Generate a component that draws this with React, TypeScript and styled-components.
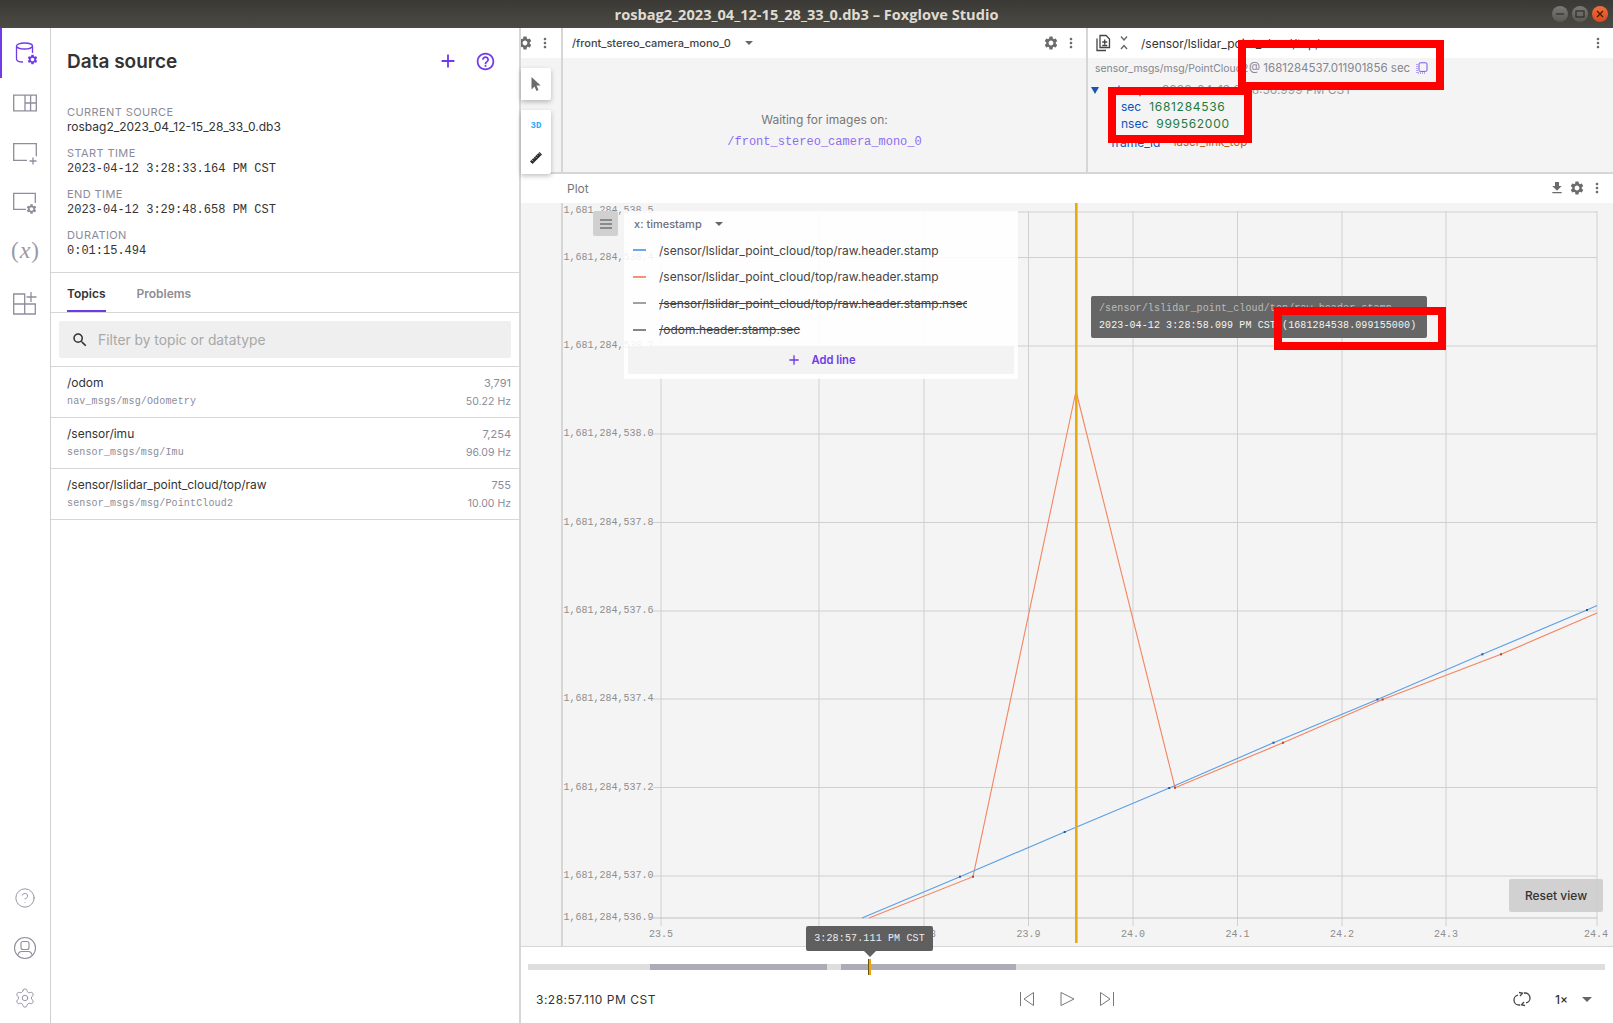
import React from "react";
import styled, { createGlobalStyle } from "styled-components";
import { Settings, CircleHelp } from "lucide-react";
import { MdAdd, MdFileDownload, MdHelpOutline, MdMoreVert, MdSearch, MdSettings } from "react-icons/md";

const SANS = `Inter, "Liberation Sans", sans-serif`;
const MONO = `"Liberation Mono", monospace`;
const PURPLE = "#6f3be8";
const ICON_GREY = "#8f8d9c";
const GEAR_PATH =
  "M19.14 12.94c.04-.3.06-.61.06-.94 0-.32-.02-.64-.07-.94l2.03-1.58c.18-.14.23-.41.12-.61l-1.92-3.32c-.12-.22-.37-.29-.59-.22l-2.39.96c-.5-.38-1.03-.7-1.62-.94l-.36-2.54c-.04-.24-.24-.41-.48-.41h-3.84c-.24 0-.43.17-.47.41l-.36 2.54c-.59.24-1.13.57-1.62.94l-2.39-.96c-.22-.08-.47 0-.59.22L2.74 8.87c-.12.21-.08.47.12.61l2.03 1.58c-.05.3-.09.63-.09.94s.02.64.07.94l-2.03 1.58c-.18.14-.23.41-.12.61l1.92 3.32c.12.22.37.29.59.22l2.39-.96c.5.38 1.03.7 1.62.94l.36 2.54c.05.24.24.41.48.41h3.84c.24 0 .44-.17.47-.41l.36-2.54c.59-.24 1.13-.56 1.62-.94l2.39.96c.22.08.47 0 .59-.22l1.92-3.32c.12-.22.07-.47-.12-.61l-2.01-1.58zM12 15.6c-1.98 0-3.6-1.62-3.6-3.6s1.62-3.6 3.6-3.6 3.6 1.62 3.6 3.6-1.62 3.6-3.6 3.6z";

const GlobalStyle = createGlobalStyle`
  html, body { margin: 0; padding: 0; background: #fff; }
  * { box-sizing: border-box; }
`;

const Page = styled.div`
  position: relative;
  width: 1613px;
  height: 1023px;
  overflow: hidden;
  display: flex;
  flex-direction: column;
  font-family: ${SANS};
  font-size: 12px;
  color: #333;
`;

const TitleBar = styled.div`
  position: relative;
  height: 28px;
  flex: none;
  display: flex;
  align-items: center;
  justify-content: center;
  background: linear-gradient(#3a3935, #4c4a44);
  color: #dfdbd2;
  font: 700 14.6px "Open Sans", sans-serif;
`;

const WindowButtons = styled.div`
  position: absolute;
  right: 5px;
  top: 6px;
  display: flex;
  gap: 4px;
`;

const WindowButton = styled.div<{ $close?: boolean }>`
  width: 16px;
  height: 16px;
  border-radius: 50%;
  display: flex;
  align-items: center;
  justify-content: center;
  background: ${(p) => (p.$close ? "linear-gradient(#f0703f, #d94a1a)" : "linear-gradient(#7a7974, #5a5954)")};
`;

const Body = styled.div`
  flex: 1;
  display: flex;
  min-height: 0;
`;

const Sidebar = styled.nav`
  width: 51px;
  flex: none;
  display: flex;
  flex-direction: column;
  border-right: 1px solid #d0d0d0;
`;

const SideButton = styled.div<{ $active?: boolean }>`
  width: 50px;
  height: 50px;
  flex: none;
  display: flex;
  align-items: center;
  justify-content: center;
  box-shadow: ${(p) => (p.$active ? `inset 2px 0 0 ${PURPLE}` : "none")};
  color: ${ICON_GREY};
`;

const Spacer = styled.div`
  flex: 1;
`;

const VarIcon = styled.span`
  padding-bottom: 5px;
  font: 23px "Liberation Serif", serif;
  color: #9a98a6;
  i {
    font-size: 24px;
    margin: 0 1px;
  }
`;

const LeftPanel = styled.section`
  position: relative;
  z-index: 1;
  width: 470px;
  flex: none;
  background: #fff;
  border-right: 2px solid #d6d6d6;
`;

const PanelHead = styled.div`
  height: 66px;
  display: flex;
  align-items: center;
  justify-content: space-between;
  padding: 0 23px 0 16px;
`;

const PanelTitle = styled.h1`
  margin: 0;
  font-size: 19px;
  font-weight: 600;
  color: #333;
`;

const HeadActions = styled.div`
  display: flex;
  align-items: center;
  gap: 16px;
  color: ${PURPLE};
`;

const SourceInfo = styled.div`
  display: flex;
  flex-direction: column;
  gap: 11px;
  padding: 11px 16px 14px;
  border-bottom: 1px solid #d6d6d6;
`;

const InfoLabel = styled.div`
  height: 15px;
  line-height: 15px;
  font-size: 11px;
  letter-spacing: 0.4px;
  color: #8b8b99;
`;

const InfoValue = styled.div<{ $mono?: boolean }>`
  height: 15px;
  line-height: ${(p) => (p.$mono ? 17 : 14)}px;
  font-family: ${(p) => (p.$mono ? MONO : SANS)};
  font-size: 12px;
  color: #333;
`;

const Tabs = styled.div`
  height: 40px;
  display: flex;
  gap: 31px;
  padding-left: 16px;
  border-bottom: 1px solid #d6d6d6;
`;

const Tab = styled.div<{ $active?: boolean }>`
  height: 39px;
  line-height: 41px;
  font-size: 12px;
  font-weight: 600;
  color: ${(p) => (p.$active ? "#333" : "#8e8e96")};
  border-bottom: 2px solid ${(p) => (p.$active ? PURPLE : "transparent")};
`;

const SearchWrap = styled.div`
  padding: 8px;
  border-bottom: 1px solid #d6d6d6;
`;

const SearchBox = styled.div`
  height: 37px;
  display: flex;
  align-items: center;
  gap: 9px;
  padding: 0 10px 0 12px;
  border-radius: 2px;
  background: #efefef;
  color: #a8a8a8;
  font-size: 13.8px;
  svg {
    color: #333;
  }
`;

const TopicRow = styled.div`
  height: 51px;
  display: flex;
  align-items: center;
  justify-content: space-between;
  padding: 0 8px 0 16px;
  border-bottom: 1px solid #d6d6d6;
`;

const TopicName = styled.div`
  font-size: 12px;
  line-height: 17px;
  color: #333;
`;

const TopicType = styled.div`
  margin-top: 2px;
  font-family: ${MONO};
  font-size: 10px;
  letter-spacing: 0.15px;
  line-height: 18px;
  color: #8b8b99;
`;

const TopicCount = styled.div`
  font-size: 11px;
  line-height: 17px;
  color: #8b8b99;
`;

const TopicRate = styled.div`
  margin-top: 1px;
  font-size: 10.5px;
  line-height: 17px;
  color: #8b8b99;
`;

const TopicStats = styled.div`
  text-align: right;
`;

const Workspace = styled.main`
  flex: 1;
  min-width: 0;
  display: flex;
  flex-direction: column;
`;

const TopRow = styled.div`
  height: 146px;
  flex: none;
  display: flex;
  border-bottom: 2px solid #d6d6d6;
`;

const Pane = styled.div<{ $width?: number }>`
  position: relative;
  display: flex;
  flex-direction: column;
  background: #f4f4f4;
  flex: ${(p) => (p.$width ? `0 0 ${p.$width}px` : "1")};
  border-right: ${(p) => (p.$width ? "2px solid #d6d6d6" : "none")};
  min-width: 0;
  overflow: ${(p) => (p.$width === 42 ? "visible" : "hidden")};
`;

const PaneHead = styled.div`
  height: 30px;
  flex: none;
  display: flex;
  align-items: center;
  gap: 4px;
  padding: 0 7px 0 9px;
  background: #fff;
  color: #333;
  svg {
    flex: none;
  }
`;

const RawHead = styled(PaneHead)`
  padding-left: 6px;
`;

const SliverHead = styled(PaneHead)`
  padding: 0;
  color: #6b6b6b;
  svg:first-child {
    margin-left: -4px;
  }
`;

const HeadIcons = styled.div`
  margin-left: auto;
  display: flex;
  align-items: center;
  gap: 4px;
  color: #6b6b6b;
`;

const DropTitle = styled.div`
  margin-right: 10px;
  font-size: 11px;
  font-weight: 500;
  color: #444;
`;

const Caret = styled.span<{ $size?: number }>`
  display: inline-block;
  width: 0;
  height: 0;
  border-left: ${(p) => p.$size ?? 5}px solid transparent;
  border-right: ${(p) => p.$size ?? 5}px solid transparent;
  border-top: ${(p) => p.$size ?? 5}px solid #666;
`;

const ToolColumn = styled.div`
  display: flex;
  flex-direction: column;
  gap: 10px;
  padding-top: 10px;
  position: relative;
  z-index: 2;
`;

const ToolCard = styled.div`
  width: 30px;
  display: flex;
  flex-direction: column;
  align-items: center;
  padding: 8px 0;
  gap: 16px;
  border-radius: 0 2px 2px 0;
  background: #fff;
  box-shadow: 0 2px 5px rgba(0, 0, 0, 0.25);
`;

const ThreeD = styled.span`
  height: 16px;
  font: 700 9px/16px ${MONO};
  color: #2aa8ff;
`;

const Waiting = styled.div`
  flex: 1;
  display: flex;
  flex-direction: column;
  align-items: center;
  justify-content: center;
  gap: 2px;
  padding-top: 32px;
  line-height: 21px;
  color: #777;
`;

const WaitingTopic = styled.div`
  font-family: ${MONO};
  color: #8f6cf0;
`;

const RawTitle = styled.div`
  margin-left: 5px;
  white-space: nowrap;
  color: #333;
`;

const RawMeta = styled.div`
  height: 20px;
  flex: none;
  display: flex;
  align-items: center;
  padding-left: 7px;
  color: #85858f;
  white-space: nowrap;
`;

const MetaType = styled.span`
  width: 154px;
  font-size: 10.4px;
`;

const MetaStamp = styled.span`
  display: flex;
  align-items: center;
  gap: 6px;
  font-size: 11.5px;
`;

const RawTree = styled.div`
  margin-top: 3px;
  padding-left: 23px;
  position: relative;
`;

const TreeRow = styled.div<{ $indent?: number; $gap?: number; $drop?: number }>`
  height: 17px;
  line-height: 17px;
  display: flex;
  gap: ${(p) => p.$gap ?? 8}px;
  margin-top: ${(p) => p.$drop ?? 0}px;
  padding-left: ${(p) => p.$indent ?? 0}px;
  white-space: nowrap;
`;

const TreeTriangle = styled.span`
  position: absolute;
  left: 3px;
  top: 6px;
  width: 0;
  height: 0;
  border-left: 4px solid transparent;
  border-right: 4px solid transparent;
  border-top: 7px solid #1a56b0;
`;

const TreeKey = styled.span`
  color: #0b53c0;
`;

const TreeNumber = styled.span`
  color: #247a3c;
  letter-spacing: 0.7px;
`;

const TreeString = styled.span`
  font-size: 11.5px;
  color: #b8621b;
`;

const TreeMuted = styled.span`
  color: #999;
`;

const PlotHead = styled(PaneHead)`
  height: 29px;
  padding: 0 8px 1px 46px;
  color: #777;
`;

const PlotBody = styled.div`
  position: relative;
  flex: none;
  height: 744px;
  background: #f4f4f4;
  border-bottom: 1px solid #d6d6d6;
`;

const Chart = styled.svg`
  display: block;
  width: 1092px;
  height: 743px;
`;

const AxisText = styled.text`
  font: 10px ${MONO};
  fill: #8e8e8e;
`;

const MenuButton = styled.div`
  position: absolute;
  left: 72px;
  top: 8px;
  width: 25px;
  height: 25px;
  display: flex;
  align-items: center;
  justify-content: center;
  border-radius: 2px;
  background: #d0d0d0;
`;

const Legend = styled.div`
  position: absolute;
  left: 103px;
  top: 8px;
  width: 394px;
  height: 168px;
  padding: 0 4px;
  background: rgba(255, 255, 255, 0.88);
`;

const LegendAxis = styled.div`
  height: 26px;
  display: flex;
  align-items: center;
  gap: 13px;
  padding-left: 6px;
  font-size: 11px;
  font-weight: 500;
  color: #6e6e7c;
`;

const LegendRow = styled.div`
  height: 26.5px;
  display: flex;
  align-items: center;
  gap: 13px;
  padding-left: 5px;
`;

const LegendSwatch = styled.span<{ $color: string }>`
  width: 13px;
  height: 2px;
  flex: none;
  background: ${(p) => p.$color};
`;

const LegendText = styled.span<{ $off?: boolean }>`
  width: 308px;
  overflow: hidden;
  white-space: nowrap;
  color: #444;
  text-decoration: ${(p) => (p.$off ? "line-through" : "none")};
`;

const AddLine = styled.div`
  height: 28px;
  margin-top: 3px;
  display: flex;
  align-items: center;
  justify-content: center;
  gap: 9px;
  background: #f3f3f3;
  color: ${PURPLE};
  font-size: 11.2px;
  font-weight: 600;
`;

const PlotTooltip = styled.div`
  position: absolute;
  left: 570px;
  top: 93px;
  width: 336px;
  height: 42px;
  padding: 4px 8px;
  border-radius: 2px;
  background: #666;
  font: 10px/17px ${MONO};
  letter-spacing: 0.1px;
  color: #f4f4f4;
  white-space: nowrap;
`;

const TooltipMuted = styled.div`
  color: #bcbcbc;
`;

const ResetButton = styled.div`
  position: absolute;
  right: 10px;
  bottom: 34px;
  width: 94px;
  height: 33px;
  display: flex;
  align-items: center;
  justify-content: center;
  border-radius: 2px;
  background: rgba(205, 205, 205, 0.9);
  font-weight: 500;
  color: #333;
`;

const Playback = styled.footer`
  position: relative;
  z-index: 2;
  flex: 1;
  display: flex;
  flex-direction: column;
  padding: 17px 8px 0 7px;
  background: #fff;
`;

const SliderTrack = styled.div`
  position: relative;
  height: 6px;
  flex: none;
  background: #dedede;
`;

const SliderRange = styled.div<{ $left: number; $width: number }>`
  position: absolute;
  top: 0;
  bottom: 0;
  left: ${(p) => p.$left}px;
  width: ${(p) => p.$width}px;
  background: #adabb5;
`;

const Playhead = styled.div`
  position: absolute;
  left: 340px;
  top: -5px;
  width: 3px;
  height: 16px;
  background: #e8a60f;
  border-left: 1px solid #6b5210;
`;

const TimeTip = styled.div`
  position: absolute;
  left: 285px;
  top: -21px;
  width: 127px;
  height: 25px;
  display: flex;
  align-items: center;
  justify-content: center;
  border-radius: 2px;
  background: #5f5f5f;
  font: 10px ${MONO};
  letter-spacing: 0.15px;
  color: #eee;
  &::after {
    content: "";
    position: absolute;
    left: 58px;
    top: 25px;
    border-left: 6px solid transparent;
    border-right: 6px solid transparent;
    border-top: 6px solid #5f5f5f;
  }
`;

const Controls = styled.div`
  flex: 1;
  margin-top: 5px;
  display: grid;
  grid-template-columns: 1fr auto 1fr;
  align-items: center;
  padding-left: 8px;
`;

const TimeNow = styled.div`
  font-size: 12px;
  letter-spacing: 0.5px;
  color: #333;
`;

const Transport = styled.div`
  display: flex;
  align-items: center;
  gap: 20px;
  margin-right: 7px;
`;

const RightControls = styled.div`
  justify-self: end;
  display: flex;
  align-items: center;
  padding-right: 13px;
`;

const Speed = styled.span`
  margin: 0 14px 0 23px;
  font-weight: 500;
  color: #333;
`;

const RedBox = styled.div<{ $left: number; $top: number; $width: number; $height: number }>`
  position: absolute;
  z-index: 5;
  left: ${(p) => p.$left}px;
  top: ${(p) => p.$top}px;
  width: ${(p) => p.$width}px;
  height: ${(p) => p.$height}px;
  border: 8px solid #f00;
`;

const Kebab = () => <MdMoreVert size={16} />;
const Gear = () => <MdSettings size={16} />;

const DatabaseIcon = () => (
  <svg width="24" height="24" viewBox="0 0 24 24" fill="none" stroke={PURPLE} strokeWidth="1.3">
    <ellipse cx="11.5" cy="5" rx="8" ry="3" />
    <path d="M3.5 5v13c0 1.8 2.4 3 6.5 3M19.5 5v7" />
    <g transform="translate(13.5 12.5) scale(.5)">
      <path d={GEAR_PATH} fill={PURPLE} stroke="none" />
    </g>
  </svg>
);

const LayoutIcon = () => (
  <svg width="24" height="24" viewBox="0 0 24 24" fill="none" stroke={ICON_GREY} strokeWidth="1.3">
    <path d="M.7 4.2h22.6v15.6H.7zM12 4.2v15.6M17.6 4.2v15.6M12 12h11.3" />
  </svg>
);

const AddPanelIcon = () => (
  <svg width="24" height="24" viewBox="0 0 24 24" fill="none" stroke={ICON_GREY} strokeWidth="1.3">
    <path d="M14 19.4H.7V2.7h22.6v12.6M20 16.5v7M16.5 20h7" />
  </svg>
);

const PanelSettingsIcon = () => (
  <svg width="24" height="24" viewBox="0 0 24 24" fill="none" stroke={ICON_GREY} strokeWidth="1.3">
    <path d="M13 18.4H.7V2.3h21.6v9.7" />
    <g transform="translate(12.5 12) scale(.5)">
      <path d={GEAR_PATH} fill={ICON_GREY} stroke="none" />
    </g>
  </svg>
);

const AddGridIcon = () => (
  <svg width="24" height="24" viewBox="0 0 24 24" fill="none" stroke={ICON_GREY} strokeWidth="1.3">
    <path d="M.7 13V3h11v20M.7 13h21.6v10H.7zM18 1v10M13.5 6h10" />
  </svg>
);

const UserIcon = () => (
  <svg width="24" height="24" viewBox="0 0 24 24" fill="none" stroke={ICON_GREY} strokeWidth="1.1">
    <circle cx="12" cy="12" r="10.5" />
    <rect x="8" y="5.5" width="8" height="8" rx="2" />
    <path d="M4.8 19.5c.5-2.8 2.2-4 4-4h6.4c1.8 0 3.5 1.2 4 4" />
  </svg>
);

const CursorIcon = () => (
  <svg width="16" height="16" viewBox="0 0 16 16" fill="#6b6b6b">
    <path d="M3.5 1v12.5l3-3 2 4.5 2-1-2-4.4h4.2z" />
  </svg>
);

const RulerIcon = () => (
  <svg width="16" height="16" viewBox="0 0 16 16">
    <path d="M2 11.5 11.5 2 14 4.5 4.5 14z" fill="#2a2a2a" />
    <path d="M3.7 9.8l1.5 1.5M5.4 8.1l1 1M7.1 6.4l1.5 1.5M8.8 4.7l1 1M10.5 3l1.5 1.5" stroke="#eee" strokeWidth=".7" />
  </svg>
);

const NoteStackIcon = () => (
  <svg width="18" height="18" viewBox="0 0 18 18" fill="none" stroke="#444" strokeWidth="1.3">
    <path d="M6 1.5h6l3.5 3.5v8.5H6zM3 4.5v12h9" />
    <path d="M10.7 5.5v5M8.2 8h5M8.2 11.5h5" />
  </svg>
);

const ExpandIcon = () => (
  <svg width="16" height="16" viewBox="0 0 16 16" fill="none" stroke="#666" strokeWidth="1.4">
    <path d="M5 1.5 8 5l3-3.5M5 14 8 10.5 11 14" />
  </svg>
);

const CopyIcon = () => (
  <svg width="12" height="12" viewBox="0 0 12 12" fill="none" stroke="#7b52ee" strokeWidth="1">
    <rect x="3" y=".8" width="8" height="8.6" rx="1.2" />
    <path d="M1 2v9h8" strokeDasharray="1 1" />
  </svg>
);

const SkipBack = () => (
  <svg width="20" height="20" viewBox="0 0 20 20" fill="none" stroke="#777" strokeWidth="1">
    <path d="M3.5 3v14M16.5 3.5v13L7 10z" />
  </svg>
);

const PlayIcon = () => (
  <svg width="20" height="20" viewBox="0 0 20 20" fill="none" stroke="#777" strokeWidth="1">
    <path d="M4 3.5v13L17 10z" />
  </svg>
);

const SkipForward = () => (
  <svg width="20" height="20" viewBox="0 0 20 20" fill="none" stroke="#777" strokeWidth="1">
    <path d="M16.5 3v14M3.5 3.5v13L13 10z" />
  </svg>
);

const LoopIcon = () => (
  <svg width="20" height="20" viewBox="0 0 20 20" fill="none" stroke="#444" strokeWidth="1.3">
    <path d="M8 16H7a5 5 0 0 1-1-9.9M12 4h1a5 5 0 0 1 1 9.9" />
    <path d="M7 3.5 10.5 4.2 8 7M13 16.5 9.5 15.8 12 13" />
  </svg>
);

const verticalGrid = [661, 819, 924, 1028.5, 1133, 1237.5, 1342, 1446, 1597];
const horizontalGrid = [212, 257.5, 346, 434, 522.5, 611, 699, 787.5, 876];
const yLabels: [string, number][] = [
  ["1,681,284,538.5", 211],
  ["1,681,284,538.4", 257.5],
  ["1,681,284,538.2", 346],
  ["1,681,284,538.0", 434],
  ["1,681,284,537.8", 522.5],
  ["1,681,284,537.6", 611],
  ["1,681,284,537.4", 699],
  ["1,681,284,537.2", 787.5],
  ["1,681,284,537.0", 876],
  ["1,681,284,536.9", 918],
];
const xLabels: [string, number][] = [
  ["23.5", 661],
  ["23.8", 924],
  ["23.9", 1028.5],
  ["24.0", 1133],
  ["24.1", 1237.5],
  ["24.2", 1342],
  ["24.3", 1446],
  ["24.4", 1597],
];
const bluePoints: [number, number][] = [
  [862, 918],
  [960, 876.7],
  [1064.7, 832],
  [1169.3, 788],
  [1273.5, 742.7],
  [1377.5, 699.5],
  [1482.4, 654.3],
  [1587, 610],
  [1597, 605.6],
];
const orangePoints: [number, number][] = [
  [869, 918],
  [973, 876.7],
  [1076, 391],
  [1175, 787.7],
  [1283, 742.7],
  [1382.6, 699.5],
  [1501, 654.3],
  [1597, 613],
];

const toPolyline = (points: [number, number][]) => points.map((p) => p.join(",")).join(" ");

const PlotChart = () => (
  <Chart viewBox="521 203 1092 743">
    {verticalGrid.map((x) => (
      <line key={x} x1={x} x2={x} y1={211} y2={926} stroke="#d0d0d0" strokeWidth="1" />
    ))}
    {horizontalGrid.map((y) => (
      <line key={y} x1={653} x2={1597} y1={y} y2={y} stroke="#d0d0d0" strokeWidth="1" />
    ))}
    <line x1={653} x2={1597} y1={918} y2={918} stroke="#c0c0c0" strokeWidth="1.2" />
    <rect x={561} y={203} width={2} height={743} fill="#d6d6d6" />
    {yLabels.map(([label, y]) => (
      <AxisText key={label} x={563.5} y={y + 2}>
        {label}
      </AxisText>
    ))}
    {xLabels.map(([label, x]) => (
      <AxisText key={label} x={x} y={937} textAnchor={label === "24.4" ? "start" : "middle"} dx={label === "24.4" ? -13 : 0}>
        {label}
      </AxisText>
    ))}
    <polyline points={toPolyline(orangePoints)} fill="none" stroke="#f4845f" strokeWidth="1.1" />
    <polyline points={toPolyline(bluePoints)} fill="none" stroke="#5a9fe8" strokeWidth="1.1" />
    {bluePoints.slice(1, -1).map(([x, y]) => (
      <rect key={x} x={x - 1} y={y - 1} width={2} height={2} fill="#1d5c9a" />
    ))}
    {orangePoints.slice(1, -1).map(([x, y]) => (
      <rect key={x} x={x - 1} y={y - 1} width={2} height={2} fill="#c0392b" />
    ))}
    <rect x={1075} y={203} width={1} height={740} fill="#aaa" />
    <rect x={1076} y={203} width={1.6} height={740} fill="#eaa90c" />
  </Chart>
);

const topics = [
  { name: "/odom", type: "nav_msgs/msg/Odometry", count: "3,791", rate: "50.22 Hz" },
  { name: "/sensor/imu", type: "sensor_msgs/msg/Imu", count: "7,254", rate: "96.09 Hz" },
  { name: "/sensor/lslidar_point_cloud/top/raw", type: "sensor_msgs/msg/PointCloud2", count: "755", rate: "10.00 Hz" },
];

const legendLines = [
  { color: "#6aa9e9", text: "/sensor/lslidar_point_cloud/top/raw.header.stamp" },
  { color: "#f9906f", text: "/sensor/lslidar_point_cloud/top/raw.header.stamp" },
  { color: "#a0a0a8", text: "/sensor/lslidar_point_cloud/top/raw.header.stamp.nsec", off: true },
  { color: "#85858d", text: "/odom.header.stamp.sec", off: true },
];

export default function App() {
  return (
    <Page>
      <GlobalStyle />
      <TitleBar>
        rosbag2_2023_04_12-15_28_33_0.db3 – Foxglove Studio
        <WindowButtons>
          <WindowButton>
            <svg width="10" height="10" viewBox="0 0 10 10" stroke="#2e2d2a" strokeWidth="1.2">
              <path d="M1 5h8" />
            </svg>
          </WindowButton>
          <WindowButton>
            <svg width="10" height="10" viewBox="0 0 10 10" fill="none" stroke="#2e2d2a" strokeWidth="1.2">
              <rect x="1" y="2" width="8" height="6" />
            </svg>
          </WindowButton>
          <WindowButton $close>
            <svg width="10" height="10" viewBox="0 0 10 10" stroke="#4a1a08" strokeWidth="1.3">
              <path d="M2 2l6 6M8 2l-6 6" />
            </svg>
          </WindowButton>
        </WindowButtons>
      </TitleBar>
      <Body>
        <Sidebar>
          <SideButton $active>
            <DatabaseIcon />
          </SideButton>
          <SideButton>
            <LayoutIcon />
          </SideButton>
          <SideButton>
            <AddPanelIcon />
          </SideButton>
          <SideButton>
            <PanelSettingsIcon />
          </SideButton>
          <SideButton>
            <VarIcon>
              (<i>x</i>)
            </VarIcon>
          </SideButton>
          <SideButton>
            <AddGridIcon />
          </SideButton>
          <Spacer />
          <SideButton>
            <CircleHelp size={22} strokeWidth={1} />
          </SideButton>
          <SideButton>
            <UserIcon />
          </SideButton>
          <SideButton>
            <Settings size={22} strokeWidth={1} />
          </SideButton>
        </Sidebar>
        <LeftPanel>
          <PanelHead>
            <PanelTitle>Data source</PanelTitle>
            <HeadActions>
              <MdAdd size={22} />
              <MdHelpOutline size={21} />
            </HeadActions>
          </PanelHead>
          <SourceInfo>
            <div>
              <InfoLabel>CURRENT SOURCE</InfoLabel>
              <InfoValue>rosbag2_2023_04_12-15_28_33_0.db3</InfoValue>
            </div>
            <div>
              <InfoLabel>START TIME</InfoLabel>
              <InfoValue $mono>2023-04-12 3:28:33.164 PM CST</InfoValue>
            </div>
            <div>
              <InfoLabel>END TIME</InfoLabel>
              <InfoValue $mono>2023-04-12 3:29:48.658 PM CST</InfoValue>
            </div>
            <div>
              <InfoLabel>DURATION</InfoLabel>
              <InfoValue $mono>0:01:15.494</InfoValue>
            </div>
          </SourceInfo>
          <Tabs>
            <Tab $active>Topics</Tab>
            <Tab>Problems</Tab>
          </Tabs>
          <SearchWrap>
            <SearchBox>
              <MdSearch size={18} />
              Filter by topic or datatype
            </SearchBox>
          </SearchWrap>
          {topics.map((topic) => (
            <TopicRow key={topic.name}>
              <div>
                <TopicName>{topic.name}</TopicName>
                <TopicType>{topic.type}</TopicType>
              </div>
              <TopicStats>
                <TopicCount>{topic.count}</TopicCount>
                <TopicRate>{topic.rate}</TopicRate>
              </TopicStats>
            </TopicRow>
          ))}
        </LeftPanel>
        <Workspace>
          <TopRow>
            <Pane $width={42}>
              <SliverHead>
                <Gear />
                <Kebab />
              </SliverHead>
              <ToolColumn>
                <ToolCard>
                  <CursorIcon />
                </ToolCard>
                <ToolCard>
                  <ThreeD>3D</ThreeD>
                  <RulerIcon />
                </ToolCard>
              </ToolColumn>
            </Pane>
            <Pane $width={525}>
              <PaneHead>
                <DropTitle>/front_stereo_camera_mono_0</DropTitle>
                <Caret $size={4} />
                <HeadIcons>
                  <Gear />
                  <Kebab />
                </HeadIcons>
              </PaneHead>
              <Waiting>
                <div>Waiting for images on:</div>
                <WaitingTopic>/front_stereo_camera_mono_0</WaitingTopic>
              </Waiting>
            </Pane>
            <Pane>
              <RawHead>
                <NoteStackIcon />
                <ExpandIcon />
                <RawTitle>/sensor/lslidar_point_cloud/top/raw</RawTitle>
                <HeadIcons>
                  <Kebab />
                </HeadIcons>
              </RawHead>
              <RawMeta>
                <MetaType>sensor_msgs/msg/PointCloud2</MetaType>
                <MetaStamp>
                  @ 1681284537.011901856 sec
                  <CopyIcon />
                </MetaStamp>
              </RawMeta>
              <RawTree>
                <TreeTriangle />
                <TreeRow $gap={16}>
                  <TreeKey>stamp</TreeKey>
                  <TreeMuted>2023-04-12 3:28:56.999 PM CST</TreeMuted>
                </TreeRow>
                <TreeRow $indent={10}>
                  <TreeKey>sec</TreeKey>
                  <TreeNumber>1681284536</TreeNumber>
                </TreeRow>
                <TreeRow $indent={10}>
                  <TreeKey>nsec</TreeKey>
                  <TreeNumber>999562000</TreeNumber>
                </TreeRow>
                <TreeRow $drop={2}>
                  <TreeKey>frame_id</TreeKey>
                  <TreeString>"laser_link_top"</TreeString>
                </TreeRow>
              </RawTree>
            </Pane>
          </TopRow>
          <PlotHead>
            Plot
            <HeadIcons>
              <MdFileDownload size={16} />
              <Gear />
              <Kebab />
            </HeadIcons>
          </PlotHead>
          <PlotBody>
            <PlotChart />
            <MenuButton>
              <svg width="14" height="14" viewBox="0 0 14 14" stroke="#444" strokeWidth="1.1">
                <path d="M1 3h12M1 7h12M1 11h12" />
              </svg>
            </MenuButton>
            <Legend>
              <LegendAxis>
                x: timestamp
                <Caret $size={4} />
              </LegendAxis>
              {legendLines.map((line) => (
                <LegendRow key={line.text}>
                  <LegendSwatch $color={line.color} />
                  <LegendText $off={line.off}>{line.text}</LegendText>
                </LegendRow>
              ))}
              <AddLine>
                <MdAdd size={16} />
                Add line
              </AddLine>
            </Legend>
            <PlotTooltip>
              <TooltipMuted>/sensor/lslidar_point_cloud/top/raw.header.stamp</TooltipMuted>
              <div>2023-04-12 3:28:58.099 PM CST (1681284538.099155000)</div>
            </PlotTooltip>
            <ResetButton>Reset view</ResetButton>
          </PlotBody>
          <Playback>
            <SliderTrack>
              <SliderRange $left={122} $width={177} />
              <SliderRange $left={313} $width={175} />
              <Playhead />
            </SliderTrack>
            <TimeTip>3:28:57.111 PM CST</TimeTip>
            <Controls>
              <TimeNow>3:28:57.110 PM CST</TimeNow>
              <Transport>
                <SkipBack />
                <PlayIcon />
                <SkipForward />
              </Transport>
              <RightControls>
                <LoopIcon />
                <Speed>1×</Speed>
                <Caret $size={5} />
              </RightControls>
            </Controls>
          </Playback>
        </Workspace>
      </Body>
      <RedBox $left={1238} $top={40} $width={206} $height={50} />
      <RedBox $left={1108} $top={87} $width={144} $height={56} />
      <RedBox $left={1274} $top={307} $width={172} $height={43} />
    </Page>
  );
}
